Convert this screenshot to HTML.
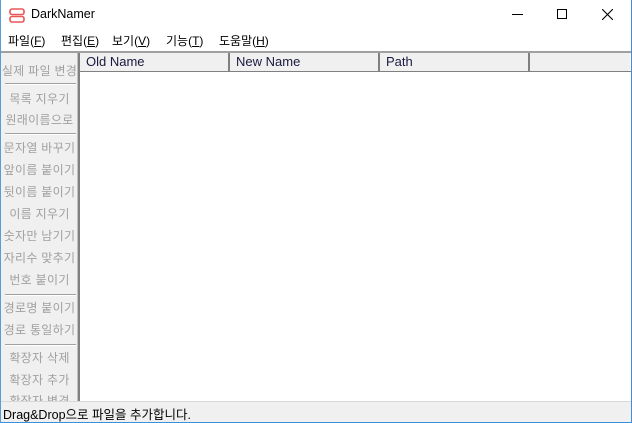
<!DOCTYPE html>
<html><head><meta charset="utf-8"><style>
*{margin:0;padding:0;box-sizing:border-box}
body{width:632px;height:423px;overflow:hidden;background:#fff;font-family:"Liberation Sans","Noto Sans CJK KR","NanumGothic",sans-serif;font-size:12px;color:#000;position:relative}
.abs{position:absolute}
.side{left:1px;top:53px;width:77px;height:348px;background:#f0f0f0;overflow:hidden}
.it{position:absolute;left:0;width:77px;text-align:center;color:#a0a0a0;font-size:12px;letter-spacing:0.3px;line-height:16px}
.sep{position:absolute;left:4px;width:71px;height:2px;background:#a0a0a0;border-bottom:1px solid #fff}
.hd{position:absolute;top:53px;height:19px;background:#f0f0f0;border-right:2px solid #808080;padding-left:6px;line-height:18px;font-size:13px;color:#1a1a40}
.mn{position:absolute;top:32px;font-size:12px}
</style></head><body>
<div class="abs" style="left:0;top:0;width:632px;height:423px;border:1px solid #3c8fd8;border-top:none;pointer-events:none;z-index:5;border-left-color:#5a9bd8"></div>
<svg class="abs" style="left:9px;top:8px" width="16" height="15"><rect x="1" y="1" width="14" height="5.5" rx="2" fill="none" stroke="#e85858" stroke-width="1.6"/><rect x="1" y="8.5" width="14" height="5.5" rx="2" fill="none" stroke="#e85858" stroke-width="1.6"/></svg>
<div class="abs" style="left:31px;top:7px;font-size:12.5px">DarkNamer</div>
<div class="abs" style="left:512px;top:14px;width:11px;height:1px;background:#000"></div>
<div class="abs" style="left:557px;top:9px;width:10px;height:10px;border:1px solid #000"></div>
<svg class="abs" style="left:602px;top:9px" width="11" height="11"><path d="M0 0L11 11M11 0L0 11" stroke="#000" stroke-width="1.1"/></svg>
<div class="mn" style="left:8px">파일(<u>F</u>)</div>
<div class="mn" style="left:61px">편집(<u>E</u>)</div>
<div class="mn" style="left:112px">보기(<u>V</u>)</div>
<div class="mn" style="left:166px">기능(<u>T</u>)</div>
<div class="mn" style="left:219px">도움말(<u>H</u>)</div>
<div class="abs" style="left:0;top:51px;width:632px;height:2px;background:#a0a0a0"></div>
<div class="abs side">
<div class="it" style="top:10px">실제 파일 변경</div>
<div class="sep" style="top:30px"></div>
<div class="it" style="top:38px">목록 지우기</div>
<div class="it" style="top:59px">원래이름으로</div>
<div class="sep" style="top:80px"></div>
<div class="it" style="top:87px">문자열 바꾸기</div>
<div class="it" style="top:109px">앞이름 붙이기</div>
<div class="it" style="top:131px">뒷이름 붙이기</div>
<div class="it" style="top:153px">이름 지우기</div>
<div class="it" style="top:175px">숫자만 남기기</div>
<div class="it" style="top:197px">자리수 맞추기</div>
<div class="it" style="top:219px">번호 붙이기</div>
<div class="sep" style="top:241px"></div>
<div class="it" style="top:247px">경로명 붙이기</div>
<div class="it" style="top:269px">경로 통일하기</div>
<div class="sep" style="top:291px"></div>
<div class="it" style="top:297px">확장자 삭제</div>
<div class="it" style="top:319px">확장자 추가</div>
<div class="it" style="top:340px">확장자 변경</div>
</div>
<div class="abs" style="left:77px;top:53px;width:3px;height:348px;background:#808080;border-left:1px solid #c0c0c0"></div>
<div class="hd" style="left:80px;width:150px">Old Name</div>
<div class="hd" style="left:230px;width:150px">New Name</div>
<div class="hd" style="left:380px;width:150px">Path</div>
<div class="hd" style="left:530px;width:100px;border-right:none"></div>
<div class="abs" style="left:80px;top:71px;width:551px;height:1px;background:#808080"></div>
<div class="abs" style="left:0;top:401px;width:632px;height:22px;background:#f0f0f0;border-top:1px solid #d8d8d8"></div>
<div class="abs" style="left:3px;top:404px;font-size:12.5px">Drag&amp;Drop으로 파일을 추가합니다.</div>
</body></html>
